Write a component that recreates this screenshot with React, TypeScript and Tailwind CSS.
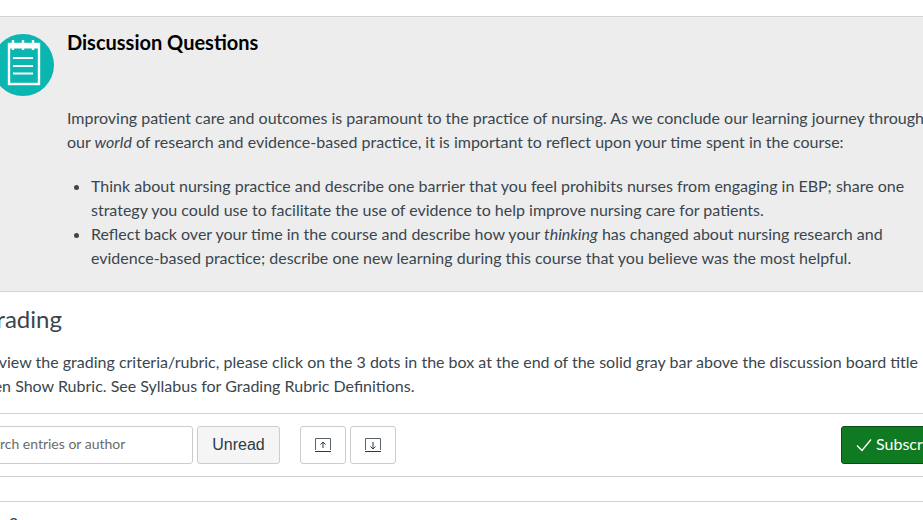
const lato = "font-['Lato',sans-serif]";

function NotepadIcon() {
  return (
    <svg viewBox="0 0 62 62" className="h-full w-full" fill="none" stroke="#fff">
      <rect x="17" y="10" width="30" height="40" strokeWidth="2.4" />
      <path d="M17 12.5h30" strokeWidth="4" />
      <path d="M21 6v10M31 6v10M41 6v10" strokeWidth="2.4" />
      <path d="M21 24h20M21 32h20M21 39.5h20" strokeWidth="2" />
    </svg>
  );
}

function UploadIcon() {
  return (
    <svg viewBox="0 0 18 14" className="h-[14px] w-[18px]" fill="none" strokeWidth="1">
      <path d="M1.5 12V0.5h15V12" stroke="#59646c" />
      <path d="M1 13.5h16" stroke="#2d3b45" />
      <path d="M9 10V4M6.5 6.5L9 4l2.5 2.5" stroke="#2d3b45" />
    </svg>
  );
}

function DownloadIcon() {
  return (
    <svg viewBox="0 0 18 14" className="h-[14px] w-[18px]" fill="none" strokeWidth="1">
      <path d="M1.5 12V0.5h15V12" stroke="#59646c" />
      <path d="M1 13.5h16" stroke="#2d3b45" />
      <path d="M9 4v7M6.5 8.5L9 11l2.5-2.5" stroke="#2d3b45" />
    </svg>
  );
}

export default function App() {
  return (
    <div className={`h-[520px] w-[923px] overflow-hidden bg-white pt-[15px] text-[16px] leading-[24px] text-[#3a464e] ${lato}`}>
      <section className="-ml-[8px] mt-px flex h-[276px] w-[1100px] border-y border-[#d4d4d4] bg-[#ededed]">
        <div className="mt-[17px] h-[62px] w-[62px] shrink-0 overflow-hidden rounded-full bg-[#0bb5b0]">
          <NotepadIcon />
        </div>
        <div className="ml-[13px] whitespace-nowrap">
          <h2 className="mt-[11px] text-[20px] leading-[28px] font-bold text-black">Discussion Questions</h2>
          <p className="mt-[50px]">
            Improving patient care and outcomes is paramount to the practice of nursing. As we conclude our learning journey through
            <br />
            our <em>world</em> of research and evidence-based practice, it is important to reflect upon your time spent in the course:
          </p>
          <ul className="mt-[20px] list-disc pl-6">
            <li>
              Think about nursing practice and describe one barrier that you feel prohibits nurses from engaging in EBP; share one
              <br />
              strategy you could use to facilitate the use of evidence to help improve nursing care for patients.
            </li>
            <li>
              Reflect back over your time in the course and describe how your <em>thinking</em> has changed about nursing research and
              <br />
              evidence-based practice; describe one new learning during this course that you believe was the most helpful.
            </li>
          </ul>
        </div>
      </section>

      <section className="-ml-[21px] w-[1100px] whitespace-nowrap">
        <h2 className="mt-[12px] text-[24px] leading-[30px]">Grading</h2>
        <p className="mt-[16px] indent-[6px]">
          review the grading criteria/rubric, please click on the 3 dots in the box at the end of the solid gray bar above the discussion board title
        </p>
        <p>then Show Rubric. See Syllabus for Grading Rubric Definitions.</p>
      </section>

      <div className="-ml-[21px] mt-[15px] flex h-[64px] w-[1100px] items-start border-y border-[#d0d0d0] pt-[12px]">
        <div className="ml-[-12px] flex h-[38px] w-[226px] items-center rounded-[3px] border border-[#c7cdd1] pb-[2px] pl-[10px] text-[14px] text-[#6b6b6b]">
          Search entries or author
        </div>
        <button className="ml-[4px] h-[38px] w-[83px] rounded-[3px] border border-[#c7cdd1] bg-[#f5f5f5] font-['Liberation_Sans',sans-serif] text-[16px] text-[#2d3b45]">
          Unread
        </button>
        <button className="ml-[20px] flex h-[38px] w-[46px] items-center justify-center rounded-[3px] border border-[#c7cdd1] bg-white">
          <UploadIcon />
        </button>
        <button className="ml-[4px] flex h-[38px] w-[46px] items-center justify-center rounded-[3px] border border-[#c7cdd1] bg-white">
          <DownloadIcon />
        </button>
        <button className="ml-[445px] flex h-[38px] w-[110px] items-center rounded-[3px] border border-[#0a4f16] bg-[#0f7a22] pb-[2px] pl-[14px] text-white">
          <svg viewBox="0 0 16 14" className="mr-[4px] mt-[2px] h-[14px] w-[16px]" fill="none" stroke="#fff" strokeWidth="1.4">
            <path d="M1 7.5l5 5L15 1.5" />
          </svg>
          Subscribe
        </button>
      </div>

      <div className="-ml-[21px] mt-[24px] w-[1100px] border-t border-[#d0d0d0] pt-[9px] pl-[30px]">
        <span className="text-[16px]">0</span>
      </div>
    </div>
  );
}
